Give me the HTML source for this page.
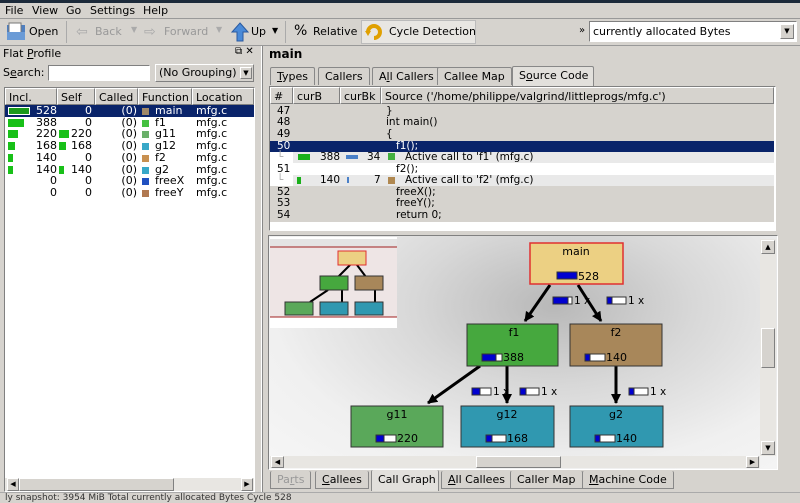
<!DOCTYPE html>
<html><head><meta charset="utf-8"><style>
*{margin:0;padding:0;box-sizing:border-box}
body{width:800px;height:500px;overflow:hidden;background:#d6d3ce;font-family:"DejaVu Sans","Liberation Sans",sans-serif;font-size:11px;color:#000;position:relative}
.a{position:absolute;white-space:nowrap}
.btnl{border-top:1px solid #fff;border-left:1px solid #fff;border-right:1px solid #808080;border-bottom:1px solid #808080}
.sunk{border-top:1px solid #808080;border-left:1px solid #808080;border-right:1px solid #fff;border-bottom:1px solid #fff}
.hd{position:absolute;top:0;height:17px;border-right:1px solid #808080;border-bottom:1px solid #808080;border-top:1px solid #fff;border-left:1px solid #fff;background:#d6d3ce;padding:2px 3px;font-size:11px;white-space:nowrap;overflow:hidden}
.r{position:absolute;height:12px;line-height:12px;font-size:11px}
.tab{position:absolute;height:18px;border:1px solid #888;border-bottom:none;background:#d6d3ce;padding:2px 6px;font-size:11px;border-radius:2px 2px 0 0;white-space:nowrap;line-height:14px}
</style></head><body>
<div class="a" style="left:0;top:0;width:800px;height:3px;background:#1c2a3a"></div>
<div class="a" style="top:4px;left:5px">File</div>
<div class="a" style="top:4px;left:32px">View</div>
<div class="a" style="top:4px;left:66px">Go</div>
<div class="a" style="top:4px;left:90px">Settings</div>
<div class="a" style="top:4px;left:143px">Help</div>
<div class="a" style="left:0;top:18px;width:800px;height:1px;background:#999"></div>
<svg class="a" style="left:6px;top:22px" width="22" height="20"><rect x="1" y="3" width="18" height="15" fill="#4f7fbf"/><rect x="3" y="1" width="12" height="10" fill="#fff" stroke="#777"/><path d="M1 10 L19 10 L19 18 L1 18Z" fill="#6b9bd6"/></svg>
<div class="a" style="left:29px;top:25px">Open</div>
<div class="a" style="left:66px;top:21px;width:1px;height:22px;background:#aaa"></div>
<div class="a" style="left:76px;top:24px;color:#aaa;font-size:14px">⇦</div>
<div class="a" style="left:95px;top:25px;color:#999">Back</div>
<div class="a" style="left:131px;top:25px;color:#aaa;font-size:8px">▼</div>
<div class="a" style="left:144px;top:24px;color:#aaa;font-size:14px">⇨</div>
<div class="a" style="left:164px;top:25px;color:#999">Forward</div>
<div class="a" style="left:216px;top:25px;color:#aaa;font-size:8px">▼</div>
<svg class="a" style="left:231px;top:22px" width="18" height="20"><path d="M9 1 L17 10 L12 10 L12 19 L6 19 L6 10 L1 10Z" fill="#4a8ad8" stroke="#2a5aa0"/></svg>
<div class="a" style="left:251px;top:25px">Up</div>
<div class="a" style="left:272px;top:26px;font-size:8px">▼</div>
<div class="a" style="left:285px;top:21px;width:1px;height:22px;background:#aaa"></div>
<div class="a" style="left:294px;top:23px;font-size:14px">%</div>
<div class="a" style="left:313px;top:25px">Relative</div>
<div class="a" style="left:361px;top:20px;width:115px;height:24px;background:#e8e6e2;border:1px solid #bbb"></div>
<svg class="a" style="left:365px;top:23px" width="18" height="18"><path d="M3 9 A6 6 0 1 1 9 15" stroke="#e0a000" stroke-width="4" fill="none"/><path d="M0 8 L6 8 L3 13Z" fill="#e0a000"/></svg>
<div class="a" style="left:389px;top:25px">Cycle Detection</div>
<div class="a" style="left:579px;top:25px;font-size:10px">»</div>
<div class="a sunk" style="left:589px;top:21px;width:208px;height:21px;background:#fff"></div>
<div class="a" style="left:593px;top:25px">currently allocated Bytes</div>
<div class="a btnl" style="left:780px;top:24px;width:14px;height:15px;background:#d6d3ce;font-size:7px;text-align:center;line-height:13px">▼</div>
<div class="a" style="left:0;top:45px;width:800px;height:1px;background:#999"></div>
<!-- left panel -->
<div class="a" style="left:3px;top:47px">Flat <u>P</u>rofile</div>
<div class="a" style="left:235px;top:46px;font-size:10px">⧉ ✕</div>
<div class="a" style="left:3px;top:66px">S<u>e</u>arch:</div>
<div class="a sunk" style="left:48px;top:65px;width:102px;height:16px;background:#fff"></div>
<div class="a btnl" style="left:155px;top:64px;width:99px;height:18px;background:#d6d3ce"></div>
<div class="a" style="left:159px;top:66px">(No Grouping)</div>
<div class="a btnl" style="left:240px;top:67px;width:12px;height:12px;font-size:7px;text-align:center;line-height:10px">▼</div>
<div class="a sunk" style="left:4px;top:87px;width:251px;height:405px;background:#fff"></div>
<div class="a" style="left:5px;top:88px;width:249px;height:17px">
<div class="hd" style="left:0;width:52px">Incl.</div><div class="hd" style="left:52px;width:38px">Self</div><div class="hd" style="left:90px;width:43px">Called</div><div class="hd" style="left:133px;width:54px">Function</div><div class="hd" style="left:187px;width:62px">Location</div>
</div>
<div class="a" style="left:5px;top:105px;width:249px;height:12px;background:#0a246a"></div>
<div class="a" style="left:5px;top:478px;width:249px;height:13px;background:#e8e6e2"></div>
<div class="a btnl" style="left:7px;top:478px;width:12px;height:13px;font-size:7px;text-align:center;line-height:11px;background:#d6d3ce">◀</div>
<div class="a btnl" style="left:19px;top:478px;width:155px;height:13px;background:#d6d3ce"></div>
<div class="a btnl" style="left:241px;top:478px;width:12px;height:13px;font-size:7px;text-align:center;line-height:11px;background:#d6d3ce">▶</div>
<div class="a" style="left:261px;top:46px;width:2px;height:446px;border-left:1px solid #fff;border-right:1px solid #888"></div>
<div class="a" style="left:0;top:492px;width:800px;height:8px;background:#d6d3ce;border-top:1px solid #aaa"></div>
<!-- right -->
<div class="a" style="left:269px;top:47px;font-weight:bold;font-size:12px">main</div>
<div class="tab" style="left:270px;top:67px"><u>T</u>ypes</div>
<div class="tab" style="left:318px;top:67px">Callers</div>
<div class="tab" style="left:372px;top:67px">A<u>l</u>l Callers</div>
<div class="tab" style="left:437px;top:67px">Callee Map</div>
<div class="tab" style="left:512px;top:66px;height:20px;width:82px;background:#e2e0dc">S<u>o</u>urce Code</div>
<div class="a sunk" style="left:269px;top:86px;width:507px;height:145px;background:#fff"></div>
<div class="a" style="left:270px;top:87px;width:504px;height:17px">
<div class="hd" style="left:0;width:23px">#</div><div class="hd" style="left:23px;width:47px">curB</div><div class="hd" style="left:70px;width:41px">curBk</div><div class="hd" style="left:111px;width:393px">Source ('/home/philippe/valgrind/littleprogs/mfg.c')</div>
</div>
<div class="a" style="left:270px;top:104px;width:504px;height:118px;background:#d6d3ce"></div>
<div class="a" style="left:270px;top:141px;width:504px;height:11px;background:#0a246a"></div>
<div class="a" style="left:270px;top:152px;width:504px;height:11px;background:#e9e9e9"></div>
<div class="a" style="left:270px;top:163px;width:504px;height:12px;background:#fff"></div>
<div class="a" style="left:270px;top:175px;width:504px;height:11px;background:#e9e9e9"></div>
<div class="a" style="left:270px;top:152px;width:23px;height:34px;background:#fff"></div>
<div style="font-size:10.5px">
<div class="a" style="left:277px;top:105px">47</div><div class="a" style="left:386px;top:105px">}</div>
<div class="a" style="left:277px;top:116px">48</div><div class="a" style="left:386px;top:116px">int main()</div>
<div class="a" style="left:277px;top:128px">49</div><div class="a" style="left:386px;top:128px">{</div>
<div class="a" style="left:277px;top:140px;color:#fff">50</div><div class="a" style="left:396px;top:140px;color:#fff">f1();</div>
<div class="a" style="left:277px;top:151px;color:#aaa">└</div>
<div class="a" style="left:298px;top:154px;width:12px;height:6px;background:#1ab01a"></div><div class="a" style="left:320px;top:151px">388</div>
<div class="a" style="left:346px;top:155px;width:12px;height:4px;background:#4a80c8"></div><div class="a" style="left:367px;top:151px">34</div>
<div class="a" style="left:388px;top:153px;width:7px;height:7px;background:#44b040"></div><div class="a" style="left:405px;top:151px">Active call to 'f1' (mfg.c)</div>
<div class="a" style="left:277px;top:163px">51</div><div class="a" style="left:396px;top:163px">f2();</div>
<div class="a" style="left:277px;top:174px;color:#aaa">└</div>
<div class="a" style="left:297px;top:177px;width:4px;height:7px;background:#1ab01a"></div><div class="a" style="left:320px;top:174px">140</div>
<div class="a" style="left:347px;top:177px;width:2px;height:6px;background:#4a80c8"></div><div class="a" style="left:374px;top:174px">7</div>
<div class="a" style="left:388px;top:177px;width:7px;height:7px;background:#b08850"></div><div class="a" style="left:405px;top:174px">Active call to 'f2' (mfg.c)</div>
<div class="a" style="left:277px;top:186px">52</div><div class="a" style="left:396px;top:186px">freeX();</div>
<div class="a" style="left:277px;top:197px">53</div><div class="a" style="left:396px;top:197px">freeY();</div>
<div class="a" style="left:277px;top:209px">54</div><div class="a" style="left:396px;top:209px">return 0;</div>
</div>
<!-- graph -->
<div class="a sunk" style="left:268px;top:235px;width:510px;height:235px;background:radial-gradient(ellipse at 56% 30%,#b8b8b8 0%,#d8d8d8 35%,#f0f0f0 70%,#f6f6f6 100%)"></div>
<svg class="a" style="left:270px;top:237px" width="506" height="231" font-family="DejaVu Sans,Liberation Sans,sans-serif" font-size="10.5">
<defs><marker id="ar" markerUnits="userSpaceOnUse" markerWidth="10" markerHeight="10" refX="9" refY="5" orient="auto"><path d="M0 0 L10 5 L0 10Z" fill="#000"/></marker></defs>
<g stroke="#000" stroke-width="3" marker-end="url(#ar)">
<line x1="280" y1="48" x2="255" y2="84"/><line x1="308" y1="48" x2="331" y2="84"/>
<line x1="210" y1="129" x2="158" y2="166"/><line x1="237" y1="129" x2="237" y2="166"/><line x1="346" y1="129" x2="346" y2="166"/>
</g>
<g stroke="#333" stroke-width="1">
<rect x="283" y="60" width="19" height="7" fill="#fff"/><rect x="283" y="60" width="15" height="7" fill="#0000d0"/><text x="304" y="67" stroke="none">1 x</text>
<rect x="337" y="60" width="19" height="7" fill="#fff"/><rect x="337" y="60" width="5" height="7" fill="#0000d0"/><text x="358" y="67" stroke="none">1 x</text>
<rect x="202" y="151" width="19" height="7" fill="#fff"/><rect x="202" y="151" width="8" height="7" fill="#0000d0"/><text x="223" y="158" stroke="none">1 x</text>
<rect x="250" y="151" width="19" height="7" fill="#fff"/><rect x="250" y="151" width="6" height="7" fill="#0000d0"/><text x="271" y="158" stroke="none">1 x</text>
<rect x="359" y="151" width="19" height="7" fill="#fff"/><rect x="359" y="151" width="5" height="7" fill="#0000d0"/><text x="380" y="158" stroke="none">1 x</text>
</g>
<g font-size="11" text-anchor="middle">
<rect x="260" y="6" width="93" height="41" fill="#ecd083" stroke="#e03030" stroke-width="1.5"/><text x="306" y="18">main</text>
<rect x="197" y="87" width="91" height="42" fill="#46a83e" stroke="#333"/><text x="244" y="99">f1</text>
<rect x="300" y="87" width="92" height="42" fill="#a8875a" stroke="#333"/><text x="346" y="99">f2</text>
<rect x="81" y="169" width="92" height="41" fill="#5aa85a" stroke="#333"/><text x="127" y="181">g11</text>
<rect x="191" y="169" width="93" height="41" fill="#3098b0" stroke="#333"/><text x="237" y="181">g12</text>
<rect x="300" y="169" width="93" height="41" fill="#3098b0" stroke="#333"/><text x="346" y="181">g2</text>
</g>
<g stroke="#333"><rect x="287" y="35" width="20" height="7" fill="#0000d0"/>
<rect x="212" y="117" width="20" height="7" fill="#fff"/><rect x="212" y="117" width="14" height="7" fill="#0000d0"/>
<rect x="315" y="117" width="20" height="7" fill="#fff"/><rect x="315" y="117" width="5" height="7" fill="#0000d0"/>
<rect x="106" y="198" width="20" height="7" fill="#fff"/><rect x="106" y="198" width="8" height="7" fill="#0000d0"/>
<rect x="216" y="198" width="20" height="7" fill="#fff"/><rect x="216" y="198" width="6" height="7" fill="#0000d0"/>
<rect x="325" y="198" width="20" height="7" fill="#fff"/><rect x="325" y="198" width="5" height="7" fill="#0000d0"/></g>
<g font-size="11"><text x="308" y="43">528</text><text x="233" y="124">388</text><text x="336" y="124">140</text><text x="127" y="205">220</text><text x="237" y="205">168</text><text x="346" y="205">140</text></g>
<rect x="0" y="0" width="127" height="91" fill="#fff"/>
<rect x="0" y="2" width="127" height="8" fill="#e4e4e4"/>
<rect x="0" y="10" width="127" height="70" fill="#eee5e5"/>
<line x1="0" y1="10" x2="127" y2="10" stroke="#a02020"/><line x1="0" y1="80" x2="127" y2="80" stroke="#a02020"/>
<g stroke="#000" stroke-width="2"><line x1="80" y1="28" x2="68" y2="40"/><line x1="87" y1="28" x2="96" y2="40"/><line x1="58" y1="53" x2="40" y2="65"/><line x1="72" y1="53" x2="72" y2="65"/><line x1="105" y1="53" x2="105" y2="65"/></g>
<rect x="68" y="14" width="28" height="14" fill="#ecd083" stroke="#e03030"/>
<rect x="50" y="39" width="28" height="14" fill="#46a83e" stroke="#333"/>
<rect x="85" y="39" width="28" height="14" fill="#a8875a" stroke="#333"/>
<rect x="15" y="65" width="28" height="13" fill="#5aa85a" stroke="#333"/>
<rect x="50" y="65" width="28" height="13" fill="#3098b0" stroke="#333"/>
<rect x="85" y="65" width="28" height="13" fill="#3098b0" stroke="#333"/>
</svg>
<div class="a" style="left:760px;top:239px;width:16px;height:217px;background:#e8e6e2"></div>
<div class="a btnl" style="left:761px;top:240px;width:14px;height:14px;font-size:7px;text-align:center;line-height:12px;background:#d6d3ce">▲</div>
<div class="a btnl" style="left:761px;top:328px;width:14px;height:40px;background:#d6d3ce"></div>
<div class="a btnl" style="left:761px;top:441px;width:14px;height:14px;font-size:7px;text-align:center;line-height:12px;background:#d6d3ce">▼</div>
<div class="a" style="left:270px;top:456px;width:490px;height:12px;background:#e8e6e2"></div>
<div class="a btnl" style="left:271px;top:456px;width:13px;height:12px;font-size:7px;text-align:center;line-height:10px;background:#d6d3ce">◀</div>
<div class="a btnl" style="left:476px;top:456px;width:85px;height:12px;background:#d6d3ce"></div>
<div class="a btnl" style="left:746px;top:456px;width:13px;height:12px;font-size:7px;text-align:center;line-height:10px;background:#d6d3ce">▶</div>
<div class="tab" style="left:270px;top:471px;color:#999;border-top:none;border-bottom:1px solid #888">Pa<u>r</u>ts</div>
<div class="tab" style="left:315px;top:471px;border-top:none;border-bottom:1px solid #888"><u>C</u>allees</div>
<div class="tab" style="left:371px;top:470px;width:68px;height:21px;background:#e2e0dc;border-top:none;padding-top:3px">Call Graph</div>
<div class="tab" style="left:441px;top:471px;border-top:none;border-bottom:1px solid #888"><u>A</u>ll Callees</div>
<div class="tab" style="left:510px;top:471px;border-top:none;border-bottom:1px solid #888">Caller Map</div>
<div class="tab" style="left:582px;top:471px;border-top:none;border-bottom:1px solid #888"><u>M</u>achine Code</div>
<!-- flat rows -->
<div style="position:absolute;left:5px;top:105px;width:249px;font-size:11px">
<div class="r" style="top:0;width:249px;color:#fff"><span class="a" style="left:3px;top:2px;width:22px;height:8px;background:#1a9a1a;border:1px solid #fff"></span><span class="a" style="right:197px">528</span><span class="a" style="right:162px">0</span><span class="a" style="right:117px">(0)</span><span class="a" style="left:137px;top:3px;width:7px;height:7px;background:#a08868"></span><span class="a" style="left:150px">main</span><span class="a" style="left:191px">mfg.c</span></div>
<div class="r" style="top:11.7px;width:249px"><span class="a" style="left:3px;top:2px;width:16px;height:8px;background:#18c018"></span><span class="a" style="right:197px">388</span><span class="a" style="right:162px">0</span><span class="a" style="right:117px">(0)</span><span class="a" style="left:137px;top:3px;width:7px;height:7px;background:#44c040"></span><span class="a" style="left:150px">f1</span><span class="a" style="left:191px">mfg.c</span></div>
<div class="r" style="top:23.4px;width:249px"><span class="a" style="left:3px;top:2px;width:10px;height:8px;background:#18c018"></span><span class="a" style="right:197px">220</span><span class="a" style="left:54px;top:2px;width:10px;height:8px;background:#18c018"></span><span class="a" style="right:162px">220</span><span class="a" style="right:117px">(0)</span><span class="a" style="left:137px;top:3px;width:7px;height:7px;background:#6ab06a"></span><span class="a" style="left:150px">g11</span><span class="a" style="left:191px">mfg.c</span></div>
<div class="r" style="top:35.1px;width:249px"><span class="a" style="left:3px;top:2px;width:7px;height:8px;background:#18c018"></span><span class="a" style="right:197px">168</span><span class="a" style="left:54px;top:2px;width:7px;height:8px;background:#18c018"></span><span class="a" style="right:162px">168</span><span class="a" style="right:117px">(0)</span><span class="a" style="left:137px;top:3px;width:7px;height:7px;background:#38a8c8"></span><span class="a" style="left:150px">g12</span><span class="a" style="left:191px">mfg.c</span></div>
<div class="r" style="top:46.8px;width:249px"><span class="a" style="left:3px;top:2px;width:5px;height:8px;background:#18c018"></span><span class="a" style="right:197px">140</span><span class="a" style="right:162px">0</span><span class="a" style="right:117px">(0)</span><span class="a" style="left:137px;top:3px;width:7px;height:7px;background:#c89050"></span><span class="a" style="left:150px">f2</span><span class="a" style="left:191px">mfg.c</span></div>
<div class="r" style="top:58.5px;width:249px"><span class="a" style="left:3px;top:2px;width:5px;height:8px;background:#18c018"></span><span class="a" style="right:197px">140</span><span class="a" style="left:54px;top:2px;width:5px;height:8px;background:#18c018"></span><span class="a" style="right:162px">140</span><span class="a" style="right:117px">(0)</span><span class="a" style="left:137px;top:3px;width:7px;height:7px;background:#38a8c8"></span><span class="a" style="left:150px">g2</span><span class="a" style="left:191px">mfg.c</span></div>
<div class="r" style="top:70.2px;width:249px"><span class="a" style="right:197px">0</span><span class="a" style="right:162px">0</span><span class="a" style="right:117px">(0)</span><span class="a" style="left:137px;top:3px;width:7px;height:7px;background:#2050c0"></span><span class="a" style="left:150px">freeX</span><span class="a" style="left:191px">mfg.c</span></div>
<div class="r" style="top:81.9px;width:249px"><span class="a" style="right:197px">0</span><span class="a" style="right:162px">0</span><span class="a" style="right:117px">(0)</span><span class="a" style="left:137px;top:3px;width:7px;height:7px;background:#b07850"></span><span class="a" style="left:150px">freeY</span><span class="a" style="left:191px">mfg.c</span></div>
</div>
<div class="a" style="left:5px;top:493px;font-size:9px;color:#333">ly snapshot: 3954 MiB  Total currently allocated Bytes Cycle 528</div>
</body></html>
